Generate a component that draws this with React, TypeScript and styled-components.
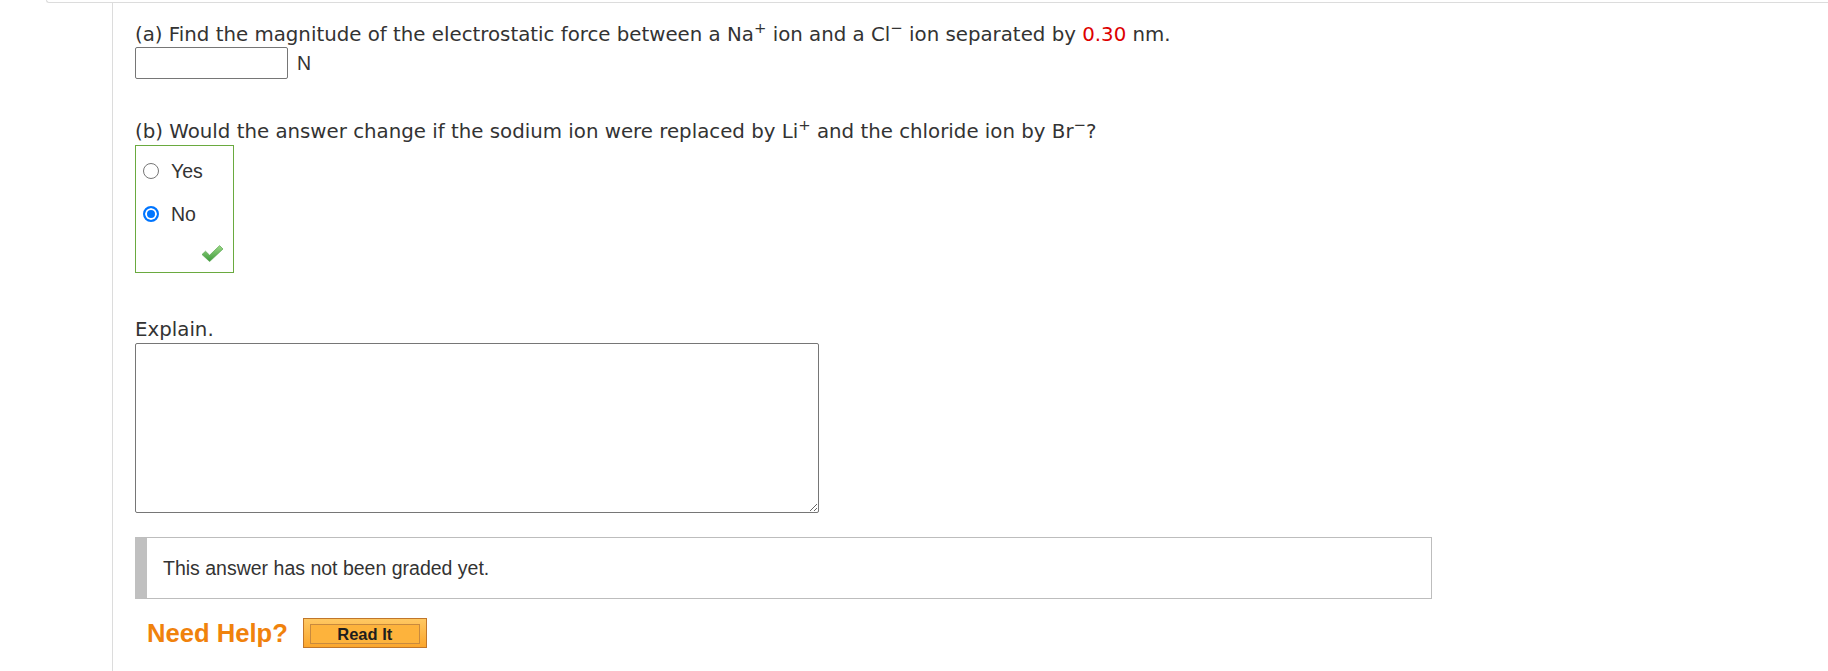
import React from 'react'
import styled, { createGlobalStyle } from 'styled-components'

const GlobalStyle = createGlobalStyle`
  html, body {
    margin: 0;
    padding: 0;
    background: #fff;
  }
  body {
    font-family: "DejaVu Sans", Verdana, sans-serif;
    color: #333;
  }
`

const TopEdge = styled.div`
  margin-left: 46px;
  height: 2px;
  border: 1px solid #dcdcdc;
  border-top: none;
  border-right: none;
  border-bottom-left-radius: 3px;
`

const Main = styled.main`
  margin-left: 112px;
  min-height: calc(100vh - 3px);
  border-left: 1px solid #dcdcdc;
  padding: 20px 0 0 22px;
  box-sizing: border-box;
`

const Prompt = styled.p<{ $top?: number }>`
  margin: ${(p) => p.$top ?? 0}px 0 0;
  font-size: 19.8px;
  line-height: 24px;
  color: #333;

  sup {
    font-size: 0.75em;
    line-height: 0;
    vertical-align: 0.55em;
  }
`

const Red = styled.span`
  color: #dd0000;
`

const AnswerRow = styled.div`
  display: flex;
  align-items: center;
  gap: 9px;
  margin-top: 0;
`

const NumberInput = styled.input`
  width: 153px;
  height: 32px;
  box-sizing: border-box;
  border: 1px solid #767676;
  border-radius: 2px;
  padding: 0 6px;
  font: inherit;
`

const Unit = styled.span`
  font-family: "Liberation Sans", Arial, sans-serif;
  font-size: 19.5px;
  color: #333;
`

const ChoiceBox = styled.div`
  width: 99px;
  margin-top: 1px;
  box-sizing: border-box;
  border: 1px solid #6aaa3f;
  padding: 10px 0 11px 7px;
  display: flex;
  flex-direction: column;
`

const Option = styled.label<{ $gap?: number }>`
  display: flex;
  align-items: center;
  gap: 12px;
  height: 30px;
  margin-top: ${(p) => p.$gap ?? 0}px;
  font-family: "Liberation Sans", Arial, sans-serif;
  font-size: 19.5px;
  color: #333;
`

const Radio = styled.input`
  appearance: none;
  margin: 0;
  width: 16px;
  height: 16px;
  border-radius: 50%;
  border: 1px solid #767676;
  background: #fff;
  box-sizing: border-box;

  &:checked {
    border: 2px solid #0075ff;
    box-shadow: inset 0 0 0 2px #fff;
    background: #0075ff;
  }
`

const CheckRow = styled.div`
  display: flex;
  justify-content: flex-end;
  padding-right: 9px;
  margin-top: 16px;
  height: 16px;
`

const ExplainArea = styled.textarea`
  display: block;
  margin-top: 1px;
  width: 684px;
  height: 170px;
  box-sizing: border-box;
  border: 1px solid #767676;
  border-radius: 2px;
  font: inherit;
`

const GradeNote = styled.div`
  margin-top: 24px;
  width: 1297px;
  height: 62px;
  box-sizing: border-box;
  border: 1px solid #bdbdbd;
  border-left: 12px solid #c0c0c0;
  padding-left: 16px;
  display: flex;
  align-items: center;
  font-family: "Liberation Sans", Arial, sans-serif;
  font-size: 19.5px;
  color: #333;
`

const HelpRow = styled.div`
  margin-top: 19px;
  padding-left: 12px;
  display: flex;
  align-items: center;
  gap: 15px;
`

const HelpTitle = styled.span`
  font-family: "Liberation Sans", Arial, sans-serif;
  font-weight: bold;
  font-size: 25.6px;
  color: #f0820c;
`

const ReadButton = styled.button`
  height: 30px;
  width: 124px;
  box-sizing: border-box;
  padding: 5px 6px 3px;
  border: 1px solid #c0762a;
  background: linear-gradient(#ffc862, #fba62c);
  cursor: pointer;
  display: flex;
`

const ReadInner = styled.span`
  flex: 1;
  border: 1px solid #c88a3e;
  background: #fdb33c;
  display: flex;
  align-items: center;
  justify-content: center;
  font-family: "Liberation Sans", Arial, sans-serif;
  font-weight: bold;
  font-size: 16.5px;
  color: #1e1e1e;
`

const CheckMark = () => (
  <svg width="23" height="17" viewBox="0 0 23 17">
    <defs>
      <linearGradient id="ok" x1="0" y1="0" x2="0" y2="1">
        <stop offset="0" stopColor="#9bd886" />
        <stop offset="1" stopColor="#3d9a3b" />
      </linearGradient>
    </defs>
    <path d="M1 9.5 L4.5 6.2 L8.6 10.2 L18.6 0.6 L22 4 L8.6 16.6 Z" fill="url(#ok)" stroke="#4c9c41" strokeWidth="0.6" />
  </svg>
)

export default function App() {
  return (
    <>
      <GlobalStyle />
      <TopEdge />
      <Main>
        <Prompt>
          (a) Find the magnitude of the electrostatic force between a Na<sup>+</sup> ion and a Cl<sup>−</sup> ion
          separated by <Red>0.30</Red> nm.
        </Prompt>
        <AnswerRow>
          <NumberInput type="text" />
          <Unit>N</Unit>
        </AnswerRow>

        <Prompt $top={41}>
          (b) Would the answer change if the sodium ion were replaced by Li<sup>+</sup> and the chloride ion by Br
          <sup>−</sup>?
        </Prompt>
        <ChoiceBox>
          <Option>
            <Radio type="radio" name="change" />
            Yes
          </Option>
          <Option $gap={13}>
            <Radio type="radio" name="change" defaultChecked />
            No
          </Option>
          <CheckRow>
            <CheckMark />
          </CheckRow>
        </ChoiceBox>

        <Prompt $top={45}>Explain.</Prompt>
        <ExplainArea />

        <GradeNote>This answer has not been graded yet.</GradeNote>

        <HelpRow>
          <HelpTitle>Need Help?</HelpTitle>
          <ReadButton>
            <ReadInner>Read It</ReadInner>
          </ReadButton>
        </HelpRow>
      </Main>
    </>
  )
}
